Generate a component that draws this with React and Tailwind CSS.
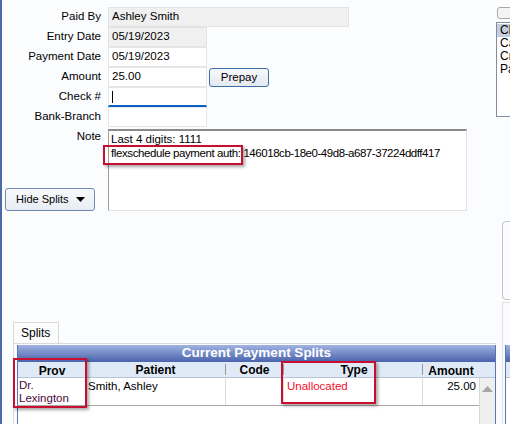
import React from "react";

const font = "font-['Liberation_Sans',Arial,sans-serif]";

function Row({ label, children }) {
  return (
    <div className="flex h-[20px] items-center">
      <div className="w-[106px] pr-[7px] text-right">{label}</div>
      {children}
    </div>
  );
}

function Field({ value, gray, className = "" }) {
  return (
    <div
      className={`h-[20px] flex items-center pl-[3px] border ${
        gray ? "bg-[#f0f0f0] border-[#e3e3e3]" : "bg-white border-[#e6e6e6]"
      } ${className}`}
    >
      {value}
    </div>
  );
}

function RedBox({ className }) {
  return (
    <div
      className={`absolute border-2 border-[#c8102e] shadow-[2px_2px_3px_rgba(0,0,0,0.35)] ${className}`}
    />
  );
}

export default function App() {
  return (
    <div
      className={`w-[510px] h-[424px] overflow-hidden flex bg-[#fbfcfe] text-[11.5px] text-black ${font}`}
    >
      <div className="w-[2px] bg-[#4b68ab]" />

      {/* left side: form + splits */}
      <div className="w-[494px] flex flex-col pt-[7px]">
        <Row label="Paid By">
          <Field value="Ashley Smith" gray className="w-[241px]" />
        </Row>
        <Row label="Entry Date">
          <Field value="05/19/2023" gray className="w-[99px]" />
        </Row>
        <Row label="Payment Date">
          <Field value="05/19/2023" className="w-[99px]" />
        </Row>
        <Row label="Amount">
          <Field value="25.00" className="w-[99px]" />
          <button className="ml-[2px] w-[60px] h-[19px] rounded-[3px] border border-[#3c6ea8] bg-gradient-to-b from-[#f6f8fb] to-[#e4e9f0] text-[11.5px]">
            Prepay
          </button>
        </Row>
        <Row label="Check #">
          <div className="w-[99px] h-[20px] bg-white border border-[#e6e6e6] border-b-2 border-b-[#0a63c0] flex items-center pl-[3px]">
            <div className="w-[1px] h-[12px] bg-black" />
          </div>
        </Row>
        <Row label="Bank-Branch">
          <Field value="" className="w-[99px]" />
        </Row>

        {/* note */}
        <div className="flex mt-[2px]">
          <div className="w-[106px] flex flex-col justify-between">
            <div className="pr-[7px] text-right leading-[14px]">Note</div>
            <button className="ml-[3px] w-[90px] h-[23px] rounded-[3px] border border-[#7088b8] bg-gradient-to-b from-[#f7f9fc] to-[#e8edf4] flex items-center justify-between pl-[10px] pr-[9px] text-[11px]">
              <span>Hide Splits</span>
              <svg width="9" height="5" viewBox="0 0 9 5">
                <path d="M0 0h9L4.5 5z" fill="#000" />
              </svg>
            </button>
          </div>
          <div className="relative w-[359px] h-[82px] bg-white border-t-2 border-l border-t-[#8a8a8a] border-l-[#a0a0a0] border-r border-b border-r-[#e3e3e3] border-b-[#e3e3e3] pl-[2px] pt-[1px] leading-[14px] whitespace-nowrap">
            <div>Last 4 digits: 1111</div>
            <div className="tracking-[-0.4px]">
              flexschedule payment auth:{" "}
              <span className="tracking-[-0.45px]">146018cb-18e0-49d8-a687-37224ddff417</span>
            </div>
            <RedBox className="left-[-6px] top-[14px] w-[140px] h-[20px]" />
          </div>
        </div>

        {/* splits tab */}
        <div className="mt-[111px] ml-[11px] w-[46px] h-[21px] border border-b-0 border-[#d9d9d9] bg-[#fcfcfc] flex items-center pl-[7px] text-[12px]">
          Splits
        </div>
        <div className="ml-[11px] flex-1 border-l border-t border-[#d9d9d9] pl-[3px] pt-[1px]">
          <div className="relative w-[479px] h-full border-l border-r border-[#5a74b8] bg-white flex flex-col">
            <div className="h-[17px] bg-gradient-to-b from-[#a1b3e1] to-[#4a63ac] text-white font-bold text-[13.5px] flex items-center justify-center">
              Current Payment Splits
            </div>
            <div className="flex h-[16px] bg-[#dfeaf6] font-bold text-[12px] border-b border-[#b8c4d4]">
              <div className="w-[68px] text-center">Prov</div>
              <div className="w-[140px] text-center border-r border-[#9a9a9a] my-[2px] leading-[12px]">Patient</div>
              <div className="w-[58px] text-center border-r border-[#9a9a9a] my-[2px] leading-[12px]">Code</div>
              <div className="w-[139px] text-center border-r border-[#9a9a9a] my-[2px] leading-[12px] pl-[2px]">Type</div>
              <div className="w-[56px] text-center">Amount</div>
            </div>
            <div className="flex flex-1">
              <div className="w-[461px] flex flex-col">
                <div className="flex h-[28px] border-b border-[#a8a8a8] leading-[13px]">
                  <div className="w-[68px] border-r border-[#dcdcdc] pl-[1px] pt-[1px] text-[#4e0a3a]">
                    Dr.
                    <br />
                    Lexington
                  </div>
                  <div className="w-[140px] border-r border-[#dcdcdc] pl-[2px] pt-[2px]">Smith, Ashley</div>
                  <div className="w-[58px] border-r border-[#dcdcdc]" />
                  <div className="w-[139px] border-r border-[#dcdcdc] pl-[3px] pt-[2px] text-[#f0102a]">Unallocated</div>
                  <div className="w-[56px] text-right pr-[3px] pt-[2px]">25.00</div>
                </div>
              </div>
              <div className="w-[18px] bg-[#efefef] border-l border-[#d8d8d8] flex justify-center pt-[8px]">
                <svg width="11" height="6" viewBox="0 0 11 6">
                  <path d="M5.5 0L11 6H0z" fill="#a6a6a6" />
                </svg>
              </div>
            </div>
            <RedBox className="left-[-5px] top-[13px] w-[74px] h-[50px]" />
            <RedBox className="left-[263px] top-[16px] w-[95px] h-[43px]" />
          </div>
        </div>
      </div>

      {/* right side panel, clipped by the window edge */}
      <div className="flex-1 flex flex-col pt-[7px] overflow-hidden">
        <div className="ml-[1px] w-[16px] h-[12px] rounded-[3px] border border-[#a8a8a8] bg-[#f4f4f4]" />
        <div className="mt-[3px] w-[30px] h-[95px] border border-[#828ea0] bg-white text-[12px] leading-[13px] pt-[1px] whitespace-nowrap overflow-hidden">
          <div className="bg-[#c4cee0] pl-[3px]">Check</div>
          <div className="pl-[3px]">Cash</div>
          <div className="pl-[3px]">Credit Card</div>
          <div className="pl-[3px]">Payroll</div>
        </div>
        <div className="mt-[104px] ml-[6px] w-[30px] h-[79px] rounded-[4px] border border-[#c4c4c4]" />
        <div className="mt-[2px] ml-[6px] flex-1 w-[30px] border-l border-t border-[#e0e0e0] pl-[2px] pt-[42px]">
          <div className="h-full border-l border-[#5a74b8] bg-white">
            <div className="h-[17px] bg-gradient-to-b from-[#a1b3e1] to-[#4a63ac]" />
            <div className="h-[16px] bg-[#dfeaf6] border-b border-[#b8c4d4]" />
          </div>
        </div>
      </div>
    </div>
  );
}
